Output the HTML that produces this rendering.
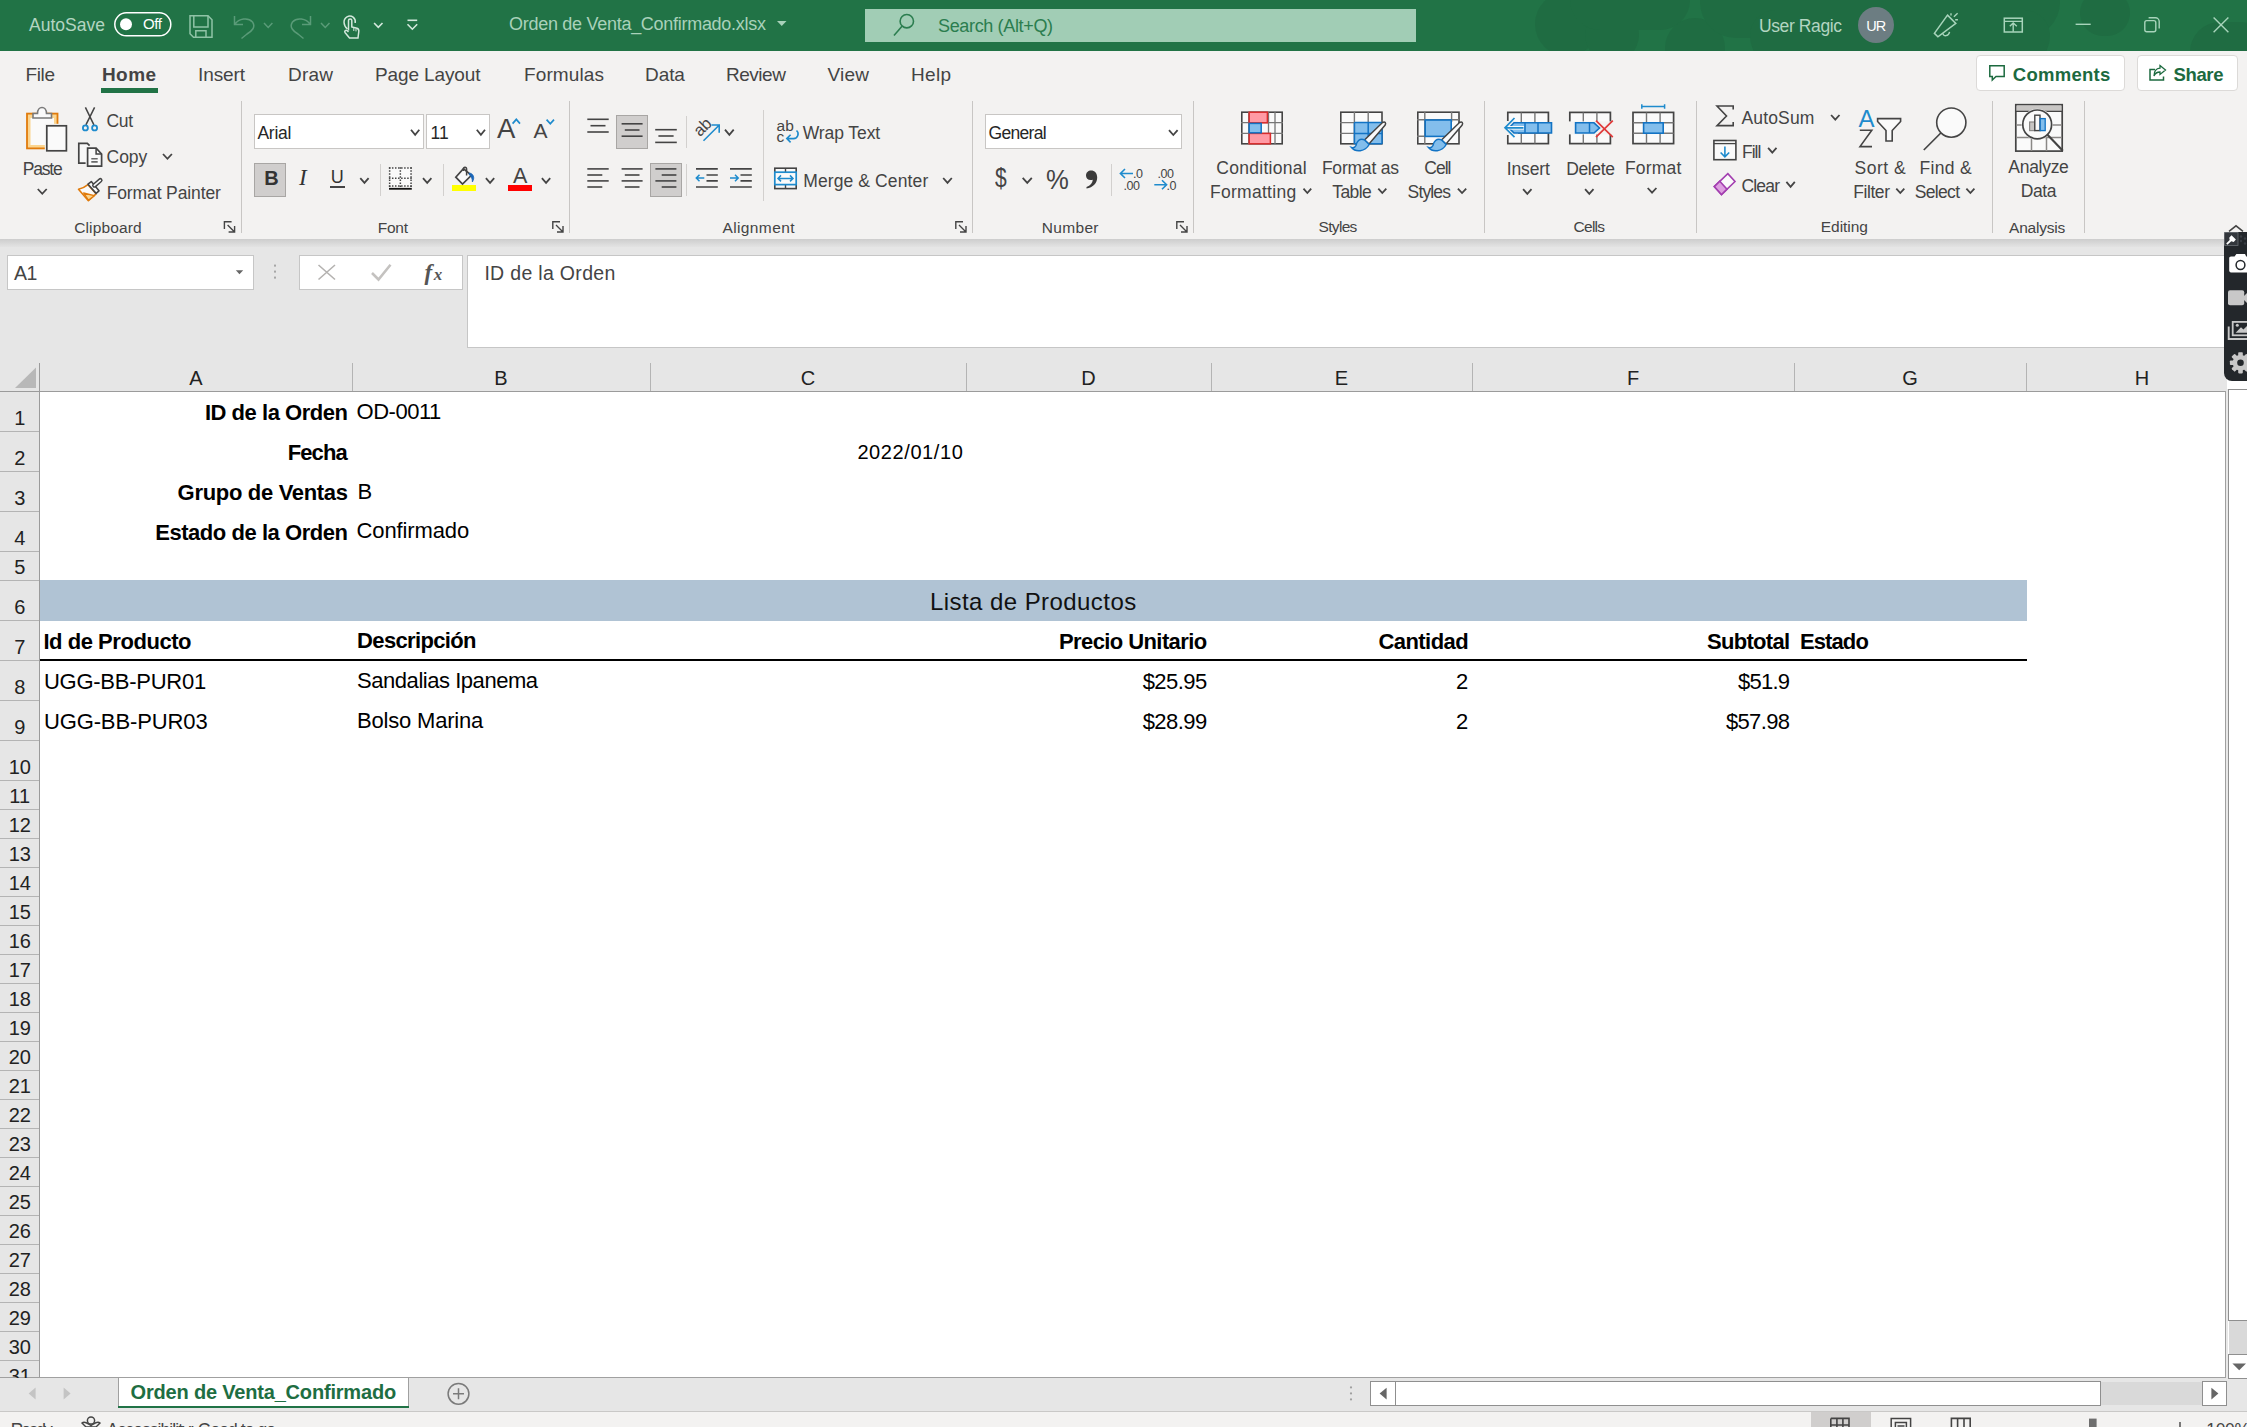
<!DOCTYPE html>
<html><head><meta charset="utf-8"><title>Orden de Venta_Confirmado.xlsx - Excel</title>
<style>
html,body{margin:0;padding:0;}
body{width:2247px;height:1427px;position:relative;overflow:hidden;background:#fff;font-family:"Liberation Sans",sans-serif;}
.t{position:absolute;white-space:pre;line-height:1;}
.b{position:absolute;box-sizing:border-box;}
svg.ov{position:absolute;left:0;top:0;}
</style></head><body>
<div class="b" style="left:0px;top:0px;width:2247px;height:51px;background:#217346;"></div>
<div class="b" style="left:1500px;top:0;width:747px;height:51px;overflow:hidden;"><div class="b" style="left:35px;top:-8px;width:64px;height:64px;border-radius:32px;background:#1f6c42;"></div><div class="b" style="left:85px;top:8px;width:54px;height:54px;border-radius:27px;background:#1f6c42;"></div><div class="b" style="left:70px;top:-30px;width:120px;height:60px;border-radius:30px;background:#1f6c42;"></div><div class="b" style="left:165px;top:18px;width:60px;height:60px;border-radius:30px;background:#1f6c42;"></div><div class="b" style="left:200px;top:-40px;width:360px;height:78px;border-radius:36px;background:#1f6c42;"></div><div class="b" style="left:250px;top:10px;width:300px;height:60px;border-radius:30px 30px 40px 40px;background:#1f6c42;"></div><div class="b" style="left:580px;top:-10px;width:50px;height:46px;border-radius:23px;background:#1f6c42;"></div><div class="b" style="left:690px;top:22px;width:80px;height:60px;border-radius:30px;background:#1f6c42;"></div></div>
<div class="b" style="left:0px;top:51px;width:2247px;height:188px;background:#f3f2f1;"></div>
<div class="b" style="left:0px;top:239px;width:2247px;height:9px;background:linear-gradient(#cdcdcd,#e6e6e6);"></div>
<div class="b" style="left:0px;top:247px;width:2247px;height:116px;background:#e6e6e6;"></div>
<div class="b" style="left:0px;top:363px;width:2247px;height:29px;background:#e6e6e6;"></div>
<div class="b" style="left:0px;top:392px;width:2247px;height:985px;background:#fff;"></div>
<div class="b" style="left:0px;top:1377px;width:2247px;height:34px;background:#e6e6e6;"></div>
<div class="b" style="left:0px;top:1411px;width:2247px;height:16px;background:#f3f2f1;"></div>
<div class="b" style="left:0px;top:1411px;width:2247px;height:1px;background:#c9c8c7;"></div>
<div class="b" style="left:865px;top:9px;width:551px;height:33px;background:#a1cdb5;"></div>
<div class="b" style="left:1976px;top:55px;width:149px;height:36px;background:#fff;border:1px solid #dcdad8;border-radius:4px;"></div>
<div class="b" style="left:2137px;top:55px;width:101px;height:36px;background:#fff;border:1px solid #dcdad8;border-radius:4px;"></div>
<div class="b" style="left:101px;top:88px;width:57px;height:5px;background:#217346;"></div>
<div class="b" style="left:241px;top:101px;width:1px;height:132px;background:#c8c6c4;"></div>
<div class="b" style="left:569px;top:101px;width:1px;height:132px;background:#c8c6c4;"></div>
<div class="b" style="left:972px;top:101px;width:1px;height:132px;background:#c8c6c4;"></div>
<div class="b" style="left:1193px;top:101px;width:1px;height:132px;background:#c8c6c4;"></div>
<div class="b" style="left:1484px;top:101px;width:1px;height:132px;background:#c8c6c4;"></div>
<div class="b" style="left:1696px;top:101px;width:1px;height:132px;background:#c8c6c4;"></div>
<div class="b" style="left:1992px;top:101px;width:1px;height:132px;background:#c8c6c4;"></div>
<div class="b" style="left:2084px;top:101px;width:1px;height:132px;background:#c8c6c4;"></div>
<div class="b" style="left:380px;top:164px;width:1px;height:32px;background:#d2d0ce;"></div>
<div class="b" style="left:443px;top:164px;width:1px;height:32px;background:#d2d0ce;"></div>
<div class="b" style="left:686px;top:116px;width:1px;height:32px;background:#d2d0ce;"></div>
<div class="b" style="left:686px;top:164px;width:1px;height:32px;background:#d2d0ce;"></div>
<div class="b" style="left:763px;top:110px;width:1px;height:91px;background:#d2d0ce;"></div>
<div class="b" style="left:1111px;top:164px;width:1px;height:32px;background:#d2d0ce;"></div>
<div class="b" style="left:254px;top:114px;width:170px;height:35px;background:#fff;border:1px solid #c8c6c4;"></div>
<div class="b" style="left:426px;top:114px;width:64px;height:35px;background:#fff;border:1px solid #c8c6c4;"></div>
<div class="b" style="left:985px;top:114px;width:197px;height:35px;background:#fff;border:1px solid #c8c6c4;"></div>
<div class="b" style="left:254px;top:163px;width:32px;height:34px;background:#d0cecd;border:1px solid #a8a6a4;"></div>
<div class="b" style="left:616px;top:115px;width:32px;height:34px;background:#d0cecd;border:1px solid #a8a6a4;"></div>
<div class="b" style="left:650px;top:163px;width:32px;height:34px;background:#d0cecd;border:1px solid #a8a6a4;"></div>
<div class="b" style="left:7px;top:255px;width:247px;height:35px;background:#fff;border:1px solid #c6c6c6;"></div>
<div class="b" style="left:299px;top:255px;width:164px;height:35px;background:#fff;border:1px solid #c6c6c6;"></div>
<div class="b" style="left:467px;top:255px;width:1790px;height:93px;background:#fff;border:1px solid #c6c6c6;"></div>
<div class="b" style="left:352px;top:363px;width:1px;height:28px;background:#b4b4b4;"></div>
<div class="b" style="left:650px;top:363px;width:1px;height:28px;background:#b4b4b4;"></div>
<div class="b" style="left:966px;top:363px;width:1px;height:28px;background:#b4b4b4;"></div>
<div class="b" style="left:1211px;top:363px;width:1px;height:28px;background:#b4b4b4;"></div>
<div class="b" style="left:1472px;top:363px;width:1px;height:28px;background:#b4b4b4;"></div>
<div class="b" style="left:1794px;top:363px;width:1px;height:28px;background:#b4b4b4;"></div>
<div class="b" style="left:2026px;top:363px;width:1px;height:28px;background:#b4b4b4;"></div>
<div class="b" style="left:0px;top:391px;width:2227px;height:1px;background:#9b9b9b;"></div>
<div class="b" style="left:0px;top:392px;width:39px;height:985px;background:#e6e6e6;"></div>
<div class="b" style="left:39px;top:363px;width:1px;height:1014px;background:#9b9b9b;"></div>
<div class="b" style="left:0px;top:431px;width:39px;height:1px;background:#b4b4b4;"></div>
<div class="b" style="left:0px;top:471px;width:39px;height:1px;background:#b4b4b4;"></div>
<div class="b" style="left:0px;top:511px;width:39px;height:1px;background:#b4b4b4;"></div>
<div class="b" style="left:0px;top:551px;width:39px;height:1px;background:#b4b4b4;"></div>
<div class="b" style="left:0px;top:580px;width:39px;height:1px;background:#b4b4b4;"></div>
<div class="b" style="left:0px;top:620px;width:39px;height:1px;background:#b4b4b4;"></div>
<div class="b" style="left:0px;top:660px;width:39px;height:1px;background:#b4b4b4;"></div>
<div class="b" style="left:0px;top:700px;width:39px;height:1px;background:#b4b4b4;"></div>
<div class="b" style="left:0px;top:740px;width:39px;height:1px;background:#b4b4b4;"></div>
<div class="b" style="left:0px;top:780px;width:39px;height:1px;background:#b4b4b4;"></div>
<div class="b" style="left:0px;top:809px;width:39px;height:1px;background:#b4b4b4;"></div>
<div class="b" style="left:0px;top:838px;width:39px;height:1px;background:#b4b4b4;"></div>
<div class="b" style="left:0px;top:867px;width:39px;height:1px;background:#b4b4b4;"></div>
<div class="b" style="left:0px;top:896px;width:39px;height:1px;background:#b4b4b4;"></div>
<div class="b" style="left:0px;top:925px;width:39px;height:1px;background:#b4b4b4;"></div>
<div class="b" style="left:0px;top:954px;width:39px;height:1px;background:#b4b4b4;"></div>
<div class="b" style="left:0px;top:983px;width:39px;height:1px;background:#b4b4b4;"></div>
<div class="b" style="left:0px;top:1012px;width:39px;height:1px;background:#b4b4b4;"></div>
<div class="b" style="left:0px;top:1041px;width:39px;height:1px;background:#b4b4b4;"></div>
<div class="b" style="left:0px;top:1070px;width:39px;height:1px;background:#b4b4b4;"></div>
<div class="b" style="left:0px;top:1099px;width:39px;height:1px;background:#b4b4b4;"></div>
<div class="b" style="left:0px;top:1128px;width:39px;height:1px;background:#b4b4b4;"></div>
<div class="b" style="left:0px;top:1157px;width:39px;height:1px;background:#b4b4b4;"></div>
<div class="b" style="left:0px;top:1186px;width:39px;height:1px;background:#b4b4b4;"></div>
<div class="b" style="left:0px;top:1215px;width:39px;height:1px;background:#b4b4b4;"></div>
<div class="b" style="left:0px;top:1244px;width:39px;height:1px;background:#b4b4b4;"></div>
<div class="b" style="left:0px;top:1273px;width:39px;height:1px;background:#b4b4b4;"></div>
<div class="b" style="left:0px;top:1302px;width:39px;height:1px;background:#b4b4b4;"></div>
<div class="b" style="left:0px;top:1331px;width:39px;height:1px;background:#b4b4b4;"></div>
<div class="b" style="left:0px;top:1360px;width:39px;height:1px;background:#b4b4b4;"></div>
<div class="b" style="left:2225px;top:391px;width:1px;height:987px;background:#a0a0a0;"></div>
<div class="b" style="left:0px;top:1377px;width:2226px;height:1px;background:#a0a0a0;"></div>
<div class="b" style="left:40px;top:580px;width:1987px;height:40.5px;background:#b0c3d4;"></div>
<div class="b" style="left:40px;top:659px;width:1987px;height:2px;background:#000;"></div>
<div class="b" style="left:2227px;top:363px;width:20px;height:1015px;background:#fff;"></div>
<div class="b" style="left:2226px;top:389px;width:2px;height:990px;background:#e8e8e8;"></div>
<div class="b" style="left:2228px;top:389px;width:20px;height:932px;background:#fff;border:1px solid #8f8f8f;"></div>
<div class="b" style="left:2229px;top:1321px;width:18px;height:33px;background:#d9d9d9;"></div>
<div class="b" style="left:2228px;top:1354px;width:20px;height:25px;background:#fff;border:1px solid #8f8f8f;"></div>
<div class="b" style="left:2227px;top:391px;width:20px;height:0px;"></div>
<div class="b" style="left:1370px;top:1381px;width:26px;height:25px;background:#fff;border:1px solid #8f8f8f;"></div>
<div class="b" style="left:1395px;top:1381px;width:706px;height:25px;background:#fff;border:1px solid #8f8f8f;"></div>
<div class="b" style="left:2101px;top:1382px;width:101px;height:23px;background:#d9d9d9;"></div>
<div class="b" style="left:2202px;top:1381px;width:25px;height:25px;background:#fff;border:1px solid #8f8f8f;"></div>
<div class="b" style="left:118px;top:1378px;width:291px;height:30px;background:#fff;"></div>
<div class="b" style="left:118px;top:1377px;width:1px;height:31px;background:#a0a0a0;"></div>
<div class="b" style="left:408px;top:1377px;width:1px;height:31px;background:#a0a0a0;"></div>
<div class="b" style="left:118px;top:1406px;width:291px;height:2px;background:#217346;"></div>
<div class="b" style="left:1811px;top:1412px;width:60px;height:15px;background:#d0cecd;"></div>
<div class="b" style="left:2224px;top:232px;width:30px;height:149px;background:#23272b;border-radius:3px 0 0 8px;"></div>
<div class="b" style="left:1857.8px;top:6.8px;width:36px;height:36px;background:#6c7d82;border-radius:18px;"></div>
<span class="t" style="left:29.00px;top:17.00px;font-size:17.5px;color:#b3d5c1;letter-spacing:0.014px;">AutoSave</span>
<span class="t" style="left:143.00px;top:16.00px;font-size:15px;color:#fff;letter-spacing:-0.400px;">Off</span>
<span class="t" style="left:509.00px;top:15.00px;font-size:18px;color:#a9d1ba;letter-spacing:-0.283px;">Orden de Venta_Confirmado.xlsx</span>
<span class="t" style="left:938.00px;top:17.00px;font-size:18px;color:#2b7d4f;letter-spacing:-0.346px;">Search (Alt+Q)</span>
<span class="t" style="left:1759.00px;top:18.00px;font-size:17.5px;color:#b3d5c1;letter-spacing:-0.400px;">User Ragic</span>
<span class="t" style="left:1866.30px;top:19.00px;font-size:14.5px;color:#fff;letter-spacing:-1.000px;">UR</span>
<span class="t" style="left:25.60px;top:65.00px;font-size:19px;color:#444;letter-spacing:-0.400px;">File</span>
<span class="t" style="left:102.00px;top:65.00px;font-size:19px;color:#444;font-weight:bold;letter-spacing:0.400px;">Home</span>
<span class="t" style="left:198.00px;top:65.00px;font-size:19px;color:#444;letter-spacing:-0.100px;">Insert</span>
<span class="t" style="left:288.00px;top:65.00px;font-size:19px;color:#444;letter-spacing:0.200px;">Draw</span>
<span class="t" style="left:375.00px;top:65.00px;font-size:19px;color:#444;letter-spacing:-0.120px;">Page Layout</span>
<span class="t" style="left:524.00px;top:65.00px;font-size:19px;color:#444;letter-spacing:0.114px;">Formulas</span>
<span class="t" style="left:645.00px;top:65.00px;font-size:19px;color:#444;letter-spacing:-0.067px;">Data</span>
<span class="t" style="left:726.00px;top:65.00px;font-size:19px;color:#444;letter-spacing:-0.480px;">Review</span>
<span class="t" style="left:827.50px;top:65.00px;font-size:19px;color:#444;letter-spacing:0.200px;">View</span>
<span class="t" style="left:911.00px;top:65.00px;font-size:19px;color:#444;letter-spacing:0.300px;">Help</span>
<span class="t" style="left:2012.80px;top:66.00px;font-size:18.5px;color:#1c6a3f;font-weight:bold;letter-spacing:0.257px;">Comments</span>
<span class="t" style="left:2173.50px;top:66.00px;font-size:18.5px;color:#1c6a3f;font-weight:bold;letter-spacing:-0.375px;">Share</span>
<span class="t" style="left:22.80px;top:161.00px;font-size:17.5px;color:#444;letter-spacing:-1.200px;">Paste</span>
<span class="t" style="left:106.50px;top:113.00px;font-size:17.5px;color:#444;letter-spacing:-0.350px;">Cut</span>
<span class="t" style="left:106.50px;top:149.00px;font-size:17.5px;color:#444;">Copy</span>
<span class="t" style="left:106.70px;top:185.00px;font-size:17.5px;color:#444;letter-spacing:-0.123px;">Format Painter</span>
<span class="t" style="left:802.70px;top:125.00px;font-size:17.5px;color:#444;letter-spacing:-0.075px;">Wrap Text</span>
<span class="t" style="left:803.20px;top:173.00px;font-size:17.5px;color:#444;letter-spacing:0.115px;">Merge &amp; Center</span>
<span class="t" style="left:1216.30px;top:160.00px;font-size:17.5px;color:#444;letter-spacing:0.290px;">Conditional</span>
<span class="t" style="left:1210.00px;top:184.00px;font-size:17.5px;color:#444;letter-spacing:0.278px;">Formatting</span>
<span class="t" style="left:1321.90px;top:160.00px;font-size:17.5px;color:#444;letter-spacing:-0.213px;">Format as</span>
<span class="t" style="left:1332.20px;top:184.00px;font-size:17.5px;color:#444;letter-spacing:-0.550px;">Table</span>
<span class="t" style="left:1424.30px;top:160.00px;font-size:17.5px;color:#444;letter-spacing:-1.000px;">Cell</span>
<span class="t" style="left:1407.60px;top:184.00px;font-size:17.5px;color:#444;letter-spacing:-0.860px;">Styles</span>
<span class="t" style="left:1506.80px;top:161.00px;font-size:17.5px;color:#444;letter-spacing:-0.140px;">Insert</span>
<span class="t" style="left:1566.20px;top:161.00px;font-size:17.5px;color:#444;letter-spacing:-0.380px;">Delete</span>
<span class="t" style="left:1624.90px;top:160.00px;font-size:17.5px;color:#444;letter-spacing:0.200px;">Format</span>
<span class="t" style="left:1741.40px;top:110.00px;font-size:17.5px;color:#444;letter-spacing:0.167px;">AutoSum</span>
<span class="t" style="left:1742.00px;top:144.00px;font-size:17.5px;color:#444;letter-spacing:-1.000px;">Fill</span>
<span class="t" style="left:1741.40px;top:178.00px;font-size:17.5px;color:#444;letter-spacing:-0.775px;">Clear</span>
<span class="t" style="left:1854.50px;top:160.00px;font-size:17.5px;color:#444;letter-spacing:0.500px;">Sort &amp;</span>
<span class="t" style="left:1853.20px;top:184.00px;font-size:17.5px;color:#444;letter-spacing:-0.420px;">Filter</span>
<span class="t" style="left:1919.60px;top:160.00px;font-size:17.5px;color:#444;letter-spacing:0.300px;">Find &amp;</span>
<span class="t" style="left:1914.70px;top:184.00px;font-size:17.5px;color:#444;letter-spacing:-0.660px;">Select</span>
<span class="t" style="left:2008.30px;top:159.00px;font-size:17.5px;color:#444;letter-spacing:-0.283px;">Analyze</span>
<span class="t" style="left:2020.80px;top:183.00px;font-size:17.5px;color:#444;letter-spacing:-0.400px;">Data</span>
<span class="t" style="left:74.20px;top:220.00px;font-size:15.5px;color:#444;letter-spacing:0.150px;">Clipboard</span>
<span class="t" style="left:377.70px;top:220.00px;font-size:15.5px;color:#444;letter-spacing:-0.233px;">Font</span>
<span class="t" style="left:722.40px;top:220.00px;font-size:15.5px;color:#444;letter-spacing:0.400px;">Alignment</span>
<span class="t" style="left:1041.70px;top:220.00px;font-size:15.5px;color:#444;letter-spacing:0.340px;">Number</span>
<span class="t" style="left:1318.60px;top:219.00px;font-size:15.5px;color:#444;letter-spacing:-0.700px;">Styles</span>
<span class="t" style="left:1573.60px;top:219.00px;font-size:15.5px;color:#444;letter-spacing:-0.750px;">Cells</span>
<span class="t" style="left:1820.80px;top:219.00px;font-size:15.5px;color:#444;letter-spacing:-0.033px;">Editing</span>
<span class="t" style="left:2009.10px;top:220.00px;font-size:15.5px;color:#444;letter-spacing:-0.214px;">Analysis</span>
<span class="t" style="left:257.40px;top:125.00px;font-size:17.5px;color:#262626;letter-spacing:-0.225px;">Arial</span>
<span class="t" style="left:430.60px;top:125.00px;font-size:17.5px;color:#262626;">11</span>
<span class="t" style="left:988.50px;top:125.00px;font-size:17.5px;color:#262626;letter-spacing:-0.683px;">General</span>
<span class="t" style="left:264.20px;top:168.00px;font-size:20px;color:#333;font-weight:bold;">B</span>
<span class="t" style="left:299.10px;top:166.00px;font-size:23px;color:#333;font-style:italic;font-family:'Liberation Serif',serif;">I</span>
<span class="t" style="left:330.80px;top:168.00px;font-size:18px;color:#333;">U</span>
<div class="b" style="left:330px;top:186px;width:15px;height:2px;background:#444;"></div>
<span class="t" style="left:497.00px;top:115.00px;font-size:27.5px;color:#444;">A</span>
<span class="t" style="left:533.50px;top:120.00px;font-size:21px;color:#444;">A</span>
<span class="t" style="left:513.10px;top:166.00px;font-size:21.5px;color:#444;">A</span>
<div class="b" style="left:452px;top:185px;width:24px;height:6px;background:#ffff00;"></div>
<div class="b" style="left:508px;top:185px;width:24px;height:6px;background:#ff0000;"></div>
<span class="t" style="left:994.70px;top:165.00px;font-size:27px;color:#444;transform:scaleX(.78);transform-origin:0 0;">$</span>
<span class="t" style="left:1045.60px;top:165.00px;font-size:28.5px;color:#444;transform:scaleX(.9);transform-origin:0 0;">%</span>
<span class="t" style="left:14.00px;top:264.00px;font-size:19.5px;color:#444;letter-spacing:-0.500px;">A1</span>
<span class="t" style="left:484.40px;top:264.00px;font-size:19.5px;color:#444;letter-spacing:0.315px;">ID de la Orden</span>
<span class="t" style="left:189.30px;top:368.00px;font-size:20px;color:#222;">A</span>
<span class="t" style="left:494.35px;top:368.00px;font-size:20px;color:#222;">B</span>
<span class="t" style="left:800.80px;top:368.00px;font-size:20px;color:#222;">C</span>
<span class="t" style="left:1081.30px;top:368.00px;font-size:20px;color:#222;">D</span>
<span class="t" style="left:1334.85px;top:368.00px;font-size:20px;color:#222;">E</span>
<span class="t" style="left:1626.90px;top:368.00px;font-size:20px;color:#222;">F</span>
<span class="t" style="left:1902.20px;top:368.00px;font-size:20px;color:#222;">G</span>
<span class="t" style="left:2134.80px;top:368.00px;font-size:20px;color:#222;">H</span>
<span class="t" style="left:14.20px;top:408.00px;font-size:20px;color:#222;">1</span>
<span class="t" style="left:14.20px;top:448.00px;font-size:20px;color:#222;">2</span>
<span class="t" style="left:14.20px;top:488.00px;font-size:20px;color:#222;">3</span>
<span class="t" style="left:14.20px;top:528.00px;font-size:20px;color:#222;">4</span>
<span class="t" style="left:14.20px;top:557.00px;font-size:20px;color:#222;">5</span>
<span class="t" style="left:14.20px;top:597.00px;font-size:20px;color:#222;">6</span>
<span class="t" style="left:14.20px;top:637.00px;font-size:20px;color:#222;">7</span>
<span class="t" style="left:14.20px;top:677.00px;font-size:20px;color:#222;">8</span>
<span class="t" style="left:14.20px;top:717.00px;font-size:20px;color:#222;">9</span>
<span class="t" style="left:8.65px;top:757.00px;font-size:20px;color:#222;">10</span>
<span class="t" style="left:9.35px;top:786.00px;font-size:20px;color:#222;">11</span>
<span class="t" style="left:8.65px;top:815.00px;font-size:20px;color:#222;">12</span>
<span class="t" style="left:8.65px;top:844.00px;font-size:20px;color:#222;">13</span>
<span class="t" style="left:8.65px;top:873.00px;font-size:20px;color:#222;">14</span>
<span class="t" style="left:8.65px;top:902.00px;font-size:20px;color:#222;">15</span>
<span class="t" style="left:8.65px;top:931.00px;font-size:20px;color:#222;">16</span>
<span class="t" style="left:8.65px;top:960.00px;font-size:20px;color:#222;">17</span>
<span class="t" style="left:8.65px;top:989.00px;font-size:20px;color:#222;">18</span>
<span class="t" style="left:8.65px;top:1018.00px;font-size:20px;color:#222;">19</span>
<span class="t" style="left:8.65px;top:1047.00px;font-size:20px;color:#222;">20</span>
<span class="t" style="left:8.65px;top:1076.00px;font-size:20px;color:#222;">21</span>
<span class="t" style="left:8.65px;top:1105.00px;font-size:20px;color:#222;">22</span>
<span class="t" style="left:8.65px;top:1134.00px;font-size:20px;color:#222;">23</span>
<span class="t" style="left:8.65px;top:1163.00px;font-size:20px;color:#222;">24</span>
<span class="t" style="left:8.65px;top:1192.00px;font-size:20px;color:#222;">25</span>
<span class="t" style="left:8.65px;top:1221.00px;font-size:20px;color:#222;">26</span>
<span class="t" style="left:8.65px;top:1250.00px;font-size:20px;color:#222;">27</span>
<span class="t" style="left:8.65px;top:1279.00px;font-size:20px;color:#222;">28</span>
<span class="t" style="left:8.65px;top:1308.00px;font-size:20px;color:#222;">29</span>
<span class="t" style="left:8.65px;top:1337.00px;font-size:20px;color:#222;">30</span>
<span class="t" style="left:8.65px;top:1366.00px;font-size:20px;color:#222;">31</span>
<div class="b" style="left:0px;top:1378px;width:118px;height:33px;background:#e6e6e6;"></div>
<span class="t" style="left:204.90px;top:402.00px;font-size:22px;color:#000;font-weight:bold;letter-spacing:-0.462px;">ID de la Orden</span>
<span class="t" style="left:356.60px;top:401.00px;font-size:22px;color:#000;letter-spacing:-0.500px;">OD-0011</span>
<span class="t" style="left:287.70px;top:442.00px;font-size:22px;color:#000;font-weight:bold;letter-spacing:-0.875px;">Fecha</span>
<span class="t" style="left:857.40px;top:442.00px;font-size:20px;color:#000;letter-spacing:0.589px;">2022/01/10</span>
<span class="t" style="left:177.60px;top:482.00px;font-size:22px;color:#000;font-weight:bold;letter-spacing:-0.314px;">Grupo de Ventas</span>
<span class="t" style="left:357.60px;top:481.00px;font-size:22px;color:#000;">B</span>
<span class="t" style="left:155.20px;top:522.00px;font-size:22px;color:#000;font-weight:bold;letter-spacing:-0.453px;">Estado de la Orden</span>
<span class="t" style="left:356.60px;top:520.00px;font-size:22px;color:#000;letter-spacing:-0.122px;">Confirmado</span>
<span class="t" style="left:930.00px;top:590.00px;font-size:24px;color:#111;letter-spacing:0.435px;">Lista de Productos</span>
<span class="t" style="left:43.40px;top:631.00px;font-size:22px;color:#000;font-weight:bold;letter-spacing:-0.454px;">Id de Producto</span>
<span class="t" style="left:357.10px;top:630.00px;font-size:22px;color:#000;font-weight:bold;letter-spacing:-0.650px;">Descripción</span>
<span class="t" style="left:1059.00px;top:631.00px;font-size:22px;color:#000;font-weight:bold;letter-spacing:-0.593px;">Precio Unitario</span>
<span class="t" style="left:1378.50px;top:631.00px;font-size:22px;color:#000;font-weight:bold;letter-spacing:-0.571px;">Cantidad</span>
<span class="t" style="left:1706.90px;top:631.00px;font-size:22px;color:#000;font-weight:bold;letter-spacing:-0.686px;">Subtotal</span>
<span class="t" style="left:1799.90px;top:631.00px;font-size:22px;color:#000;font-weight:bold;letter-spacing:-0.880px;">Estado</span>
<span class="t" style="left:43.90px;top:671.00px;font-size:22px;color:#000;letter-spacing:-0.245px;">UGG-BB-PUR01</span>
<span class="t" style="left:43.90px;top:711.00px;font-size:22px;color:#000;letter-spacing:-0.118px;">UGG-BB-PUR03</span>
<span class="t" style="left:357.10px;top:670.00px;font-size:22px;color:#000;letter-spacing:-0.463px;">Sandalias Ipanema</span>
<span class="t" style="left:357.10px;top:710.00px;font-size:22px;color:#000;letter-spacing:-0.200px;">Bolso Marina</span>
<span class="t" style="left:1142.70px;top:671.00px;font-size:22px;color:#000;letter-spacing:-0.560px;">$25.95</span>
<span class="t" style="left:1142.70px;top:711.00px;font-size:22px;color:#000;letter-spacing:-0.560px;">$28.99</span>
<span class="t" style="left:1456.00px;top:671.00px;font-size:22px;color:#000;">2</span>
<span class="t" style="left:1456.00px;top:711.00px;font-size:22px;color:#000;">2</span>
<span class="t" style="left:1738.10px;top:671.00px;font-size:22px;color:#000;letter-spacing:-0.775px;">$51.9</span>
<span class="t" style="left:1725.90px;top:711.00px;font-size:22px;color:#000;letter-spacing:-0.620px;">$57.98</span>
<span class="t" style="left:130.60px;top:1382.00px;font-size:20px;color:#1e6e42;font-weight:bold;letter-spacing:-0.188px;">Orden de Venta_Confirmado</span>
<span class="t" style="left:10.70px;top:1422.00px;font-size:17.5px;color:#444;letter-spacing:-2.150px;">Ready</span>
<span class="t" style="left:106.80px;top:1422.00px;font-size:17.5px;color:#444;letter-spacing:-0.933px;">Accessibility: Good to go</span>
<span class="t" style="left:2206.30px;top:1422.00px;font-size:17.5px;color:#444;letter-spacing:-0.367px;">100%</span>
<svg class="ov" width="2247" height="1427" viewBox="0 0 2247 1427" fill="none">
<rect x="114.8" y="12.8" width="56" height="23" rx="11.5" stroke="#fff" stroke-width="1.5"/>
<circle cx="126" cy="24.3" r="6" fill="#fff"/>
<path d="M190 15.8 H208 L212 19.8 V37.2 H193.5 L190 33.7 Z" stroke="#8fc3a6" stroke-width="1.5"/><path d="M193.8 15.8 V27 H208 V15.8 M195.8 37.2 V30.8 H206 V37.2" stroke="#8fc3a6" stroke-width="1.5"/>
<path d="M234.5 16 V24.5 H243 M234.8 24.3 C239 18.5 248 17 252.5 22 C256 27 252 31 247 34 L241.5 38.5" stroke="#5a9b78" stroke-width="1.5"/>
<path d="M264 23 L268.2 27.4 L272.4 23" stroke="#5a9b78" stroke-width="1.5" fill="none"/>
<path d="M310.5 16 V24.5 H302 M310.2 24.3 C306 18.5 297 17 292.5 22 C289 27 293 31 298 34 L303.5 38.5" stroke="#5a9b78" stroke-width="1.5"/>
<path d="M321 23 L325.25 27.4 L329.5 23" stroke="#5a9b78" stroke-width="1.5" fill="none"/>
<path d="M347.5 29 C343.5 26 342.5 19.5 347 16.8 C351.5 14.5 356 18 355.2 23" stroke="#d3e8dc" stroke-width="1.5"/><path d="M348.5 30.5 V20.5 C348.5 18.5 351.8 18.5 351.8 20.5 V27 L357 28.2 C358.8 28.8 359 30 358.8 31.5 L358 38 H349.5 L345 32.5 C344 31 346 29.5 347.2 30.8 L348.5 32" stroke="#d3e8dc" stroke-width="1.5"/><path d="M353.8 28 V31 M356 28.6 V31.4" stroke="#d3e8dc" stroke-width="1"/>
<path d="M374.1 23 L378.3 27.4 L382.5 23" stroke="#d3e8dc" stroke-width="1.6" fill="none"/>
<path d="M407.5 20.3 H417.2" stroke="#d3e8dc" stroke-width="1.6"/>
<path d="M407.5 24.2 L412.35 29.2 L417.2 24.2" stroke="#d3e8dc" stroke-width="1.6" fill="none"/>
<path d="M777 21 H786.5 L781.75 26 Z" fill="#a9d1ba"/>
<circle cx="906.8" cy="21.2" r="6.7" stroke="#2b7d4f" stroke-width="1.6"/><path d="M902 26.2 L894 35.4" stroke="#2b7d4f" stroke-width="1.6"/>
<path d="M1947.5 15.1 L1955.8 23.4 L1937.9 36.8 L1934.4 33.3 Z" stroke="#a8d4bb" stroke-width="1.5" stroke-linejoin="miter"/><path d="M1942.8 33.4 C1943.2 36.8 1948.6 36.6 1949.6 31.8" stroke="#a8d4bb" stroke-width="1.4"/><path d="M1951 13.2 V15.4 M1953.9 16.7 L1957.6 13.3 M1955.2 19.7 H1957.9" stroke="#a8d4bb" stroke-width="1.4"/>
<rect x="2004.3" y="18.2" width="18" height="13.8" stroke="#a8d4bb" stroke-width="1.5"/><path d="M2004.3 21.4 H2022.3 M2013.2 31.8 V23.4 M2009.8 26.2 L2013.2 23 L2016.8 26.2" stroke="#a8d4bb" stroke-width="1.4"/>
<path d="M2075.6 24.3 H2090.7" stroke="#a8d4bb" stroke-width="1.4"/>
<rect x="2144.8" y="20.6" width="11" height="11.2" rx="2" stroke="#a8d4bb" stroke-width="1.4"/><path d="M2148.6 17.8 H2155.5 C2157.5 17.8 2159.2 19.5 2159.2 21.5 V28.6" stroke="#a8d4bb" stroke-width="1.4"/>
<path d="M2213.6 17.4 L2228.4 32.2 M2228.4 17.4 L2213.6 32.2" stroke="#a8d4bb" stroke-width="1.4"/>
<path d="M1989.8 65.8 H2004.2 V76.5 H1996 L1992.3 80 V76.5 H1989.8 Z" stroke="#1c6a3f" stroke-width="1.5"/>
<path d="M2155 69.5 H2150 V80 H2163.5 V76.5" stroke="#1c6a3f" stroke-width="1.5"/><path d="M2160 65.5 L2165.5 70 L2160 74.5 V72 C2157 72 2155 73.5 2154 76 C2154 71.5 2156.5 68.5 2160 68.2 Z" stroke="#1c6a3f" stroke-width="1.3"/>
<rect x="27" y="113.6" width="30.5" height="34.8" fill="#fbd58f" stroke="#e07b0c" stroke-width="1.8"/><rect x="30.5" y="118" width="23.5" height="27" fill="#fafafa"/><path d="M33 118 V113.5 H37.5 C37.5 105.5 46.5 105.5 46.5 113.5 H51.5 V118 Z" fill="#fafafa" stroke="#7a7a7a" stroke-width="1.6"/><rect x="44.8" y="123.8" width="23.6" height="29" fill="#f3f2f1"/><rect x="46.8" y="125.8" width="19.6" height="25" fill="#fafafa" stroke="#444" stroke-width="1.7"/>
<path d="M37.8 189 L42.25 193.8 L46.7 189" stroke="#444" stroke-width="1.8" fill="none"/>
<path d="M85.4 107.4 L93.9 124.8 M94.6 107.4 L85.9 124.8" stroke="#444" stroke-width="1.5"/><circle cx="85.4" cy="127.9" r="2.5" stroke="#1e8bcd" stroke-width="1.8"/><circle cx="94.6" cy="127.9" r="2.5" stroke="#1e8bcd" stroke-width="1.8"/>
<path d="M85.6 163.2 H78.8 V143.4 H87.3 L89.6 145.7" stroke="#444" stroke-width="1.7" fill="#f8f8f8"/><path d="M87.6 148.2 H96.1 L101.6 154 V166.2 H87.6 Z" fill="#fafafa" stroke="#444" stroke-width="1.7"/><path d="M96.1 148.2 V154 H101.6" stroke="#444" stroke-width="1.5"/><path d="M91.3 158.8 H97.7 M91.3 161.9 H97.7" stroke="#6a6a6a" stroke-width="1.6"/>
<path d="M163 154 L167.45 158.8 L171.9 154" stroke="#444" stroke-width="1.8" fill="none"/>
<path d="M78.5 189.3 C82 188.5 85 187 88 184.6 L96.1 193.8 L88.4 200.7 Z" fill="#fafafa" stroke="#e07b0c" stroke-width="1.6" stroke-linejoin="round"/><path d="M83.6 193 L94.3 195.7 L88.4 200.2 Z" fill="#fbd58f" stroke="#e07b0c" stroke-width="1.3" stroke-linejoin="round"/><path d="M88 184.2 L91.3 181.6 L99 190.8 L96.1 193.4 Z" fill="#fafafa" stroke="#444" stroke-width="1.6" stroke-linejoin="round"/><path d="M94.4 185.4 L100.3 180.3" stroke="#444" stroke-width="4.6" stroke-linecap="round"/><path d="M94.4 185.4 L100.3 180.3" stroke="#fafafa" stroke-width="1.7" stroke-linecap="round"/>
<path d="M231.6 221.8 H224.4 V229.0" stroke="#444" stroke-width="1.4"/><path d="M227.6 225 L234.6 232 M234.6 226 V232 H228.6" stroke="#444" stroke-width="1.4"/>
<path d="M411 129.8 L415.15 134.8 L419.3 129.8" stroke="#444" stroke-width="1.8" fill="none"/>
<path d="M476.8 129.8 L480.9 134.8 L485 129.8" stroke="#444" stroke-width="1.8" fill="none"/>
<path d="M512.6 123.6 L516.3 119.4 L520 123.6" stroke="#1e8bcd" stroke-width="1.7" fill="none"/>
<path d="M546.6 119.6 L550.3 123.8 L554 119.6" stroke="#1e8bcd" stroke-width="1.7" fill="none"/>
<path d="M360.3 178.2 L364.45000000000005 182.8 L368.6 178.2" stroke="#444" stroke-width="1.8" fill="none"/>
<path d="M423 178.2 L427.2 182.8 L431.4 178.2" stroke="#444" stroke-width="1.8" fill="none"/>
<path d="M485.9 178.2 L490.04999999999995 182.8 L494.2 178.2" stroke="#444" stroke-width="1.8" fill="none"/>
<path d="M541.9 178.2 L546.05 182.8 L550.2 178.2" stroke="#444" stroke-width="1.8" fill="none"/>
<rect x="389.6" y="167.8" width="21.5" height="18.4" fill="#fafafa"/><path d="M388.9 167.9 H412 M388.9 186.1 H412 M388.9 178.3 H412" stroke="#444" stroke-width="1.5" stroke-dasharray="1.5 1.55"/><path d="M389.65 167.2 V187 M411.05 167.2 V187 M400.35 167.2 V187" stroke="#444" stroke-width="1.5" stroke-dasharray="1.5 1.55"/><path d="M389 188.8 H411.8" stroke="#111" stroke-width="1.8"/>
<path d="M463.4 168.6 L471.4 175.4 L462.5 184 L455.8 177.2 Z" fill="#fafafa" stroke="#444" stroke-width="1.7" stroke-linejoin="miter"/><path d="M463.4 171 V169.2 C463.4 166.6 466.6 166.6 466.6 169.2 V175.4" stroke="#444" stroke-width="1.5"/><path d="M469 173.2 C472.5 172.8 474.2 176.5 473.6 179 C473.2 180.5 472.8 181.2 472.4 182 C472.4 179 471.5 176.6 469.4 174.8 Z" fill="#1a66b8" stroke="#1a66b8" stroke-width="0.8"/>
<path d="M560 221.8 H552.8 V229" stroke="#444" stroke-width="1.4"/><path d="M556 225 L563 232 M563 226 V232 H557" stroke="#444" stroke-width="1.4"/>
<path d="M587.3 119.3 H608.7" stroke="#444" stroke-width="1.6"/>
<path d="M590.5 125.7 H605.5" stroke="#444" stroke-width="1.6"/>
<path d="M587.3 132 H608.7" stroke="#444" stroke-width="1.6"/>
<path d="M621.6 123.8 H642.6" stroke="#444" stroke-width="1.6"/>
<path d="M624.8 130 H639.5" stroke="#444" stroke-width="1.6"/>
<path d="M621.6 136.2 H642.6" stroke="#444" stroke-width="1.6"/>
<path d="M655.2 129.7 H676.8" stroke="#444" stroke-width="1.6"/>
<path d="M658.4 136 H673.6" stroke="#444" stroke-width="1.6"/>
<path d="M655.2 142.4 H676.8" stroke="#444" stroke-width="1.6"/>
<path d="M587.3 168.9 H608.7" stroke="#444" stroke-width="1.6"/>
<path d="M587.3 175 H602.3" stroke="#444" stroke-width="1.6"/>
<path d="M587.3 180.9 H608.7" stroke="#444" stroke-width="1.6"/>
<path d="M587.3 187 H602.3" stroke="#444" stroke-width="1.6"/>
<path d="M621.6 168.9 H642.6" stroke="#444" stroke-width="1.6"/>
<path d="M624.8 175 H639.5" stroke="#444" stroke-width="1.6"/>
<path d="M621.6 180.9 H642.6" stroke="#444" stroke-width="1.6"/>
<path d="M624.8 187 H639.5" stroke="#444" stroke-width="1.6"/>
<path d="M655.4 168.9 H676.4" stroke="#444" stroke-width="1.6"/>
<path d="M661.7 175 H676.4" stroke="#444" stroke-width="1.6"/>
<path d="M655.4 180.9 H676.4" stroke="#444" stroke-width="1.6"/>
<path d="M661.7 187 H676.4" stroke="#444" stroke-width="1.6"/>
<g transform="rotate(-45 704 127)"><text x="694" y="131.5" font-family="Liberation Sans, sans-serif" font-size="16.5" fill="#444" letter-spacing="-0.5">ab</text></g>
<path d="M703.5 140.8 L718.8 125.5 M711.5 125 H719.2 V132.8" stroke="#1e8bcd" stroke-width="1.6"/>
<path d="M725 129.7 L729.35 134.8 L733.7 129.7" stroke="#444" stroke-width="1.8" fill="none"/>
<path d="M696 168.9 H717.8 M706.5 175 H717.8 M706.5 180.9 H717.8 M696 187 H717.8" stroke="#444" stroke-width="1.6"/>
<path d="M696.3 178 H704.3 M699.5 174.8 L696.3 178 L699.5 181.2" stroke="#1e8bcd" stroke-width="1.5"/>
<path d="M730 168.9 H751.8 M740.5 175 H751.8 M740.5 180.9 H751.8 M730 187 H751.8" stroke="#444" stroke-width="1.6"/>
<path d="M730 178 H738 M735 174.8 L738.2 178 L735 181.2" stroke="#1e8bcd" stroke-width="1.5"/>
<text x="776.6" y="130.8" font-family="Liberation Sans, sans-serif" font-size="15.5" fill="#444">ab</text><text x="776.6" y="142.2" font-family="Liberation Sans, sans-serif" font-size="15.5" fill="#444">c</text><path d="M796.5 130.5 C799.5 133 798 138.6 793.5 138.6 H787 M790.6 134.8 L786.8 138.6 L790.6 142.4" stroke="#1e8bcd" stroke-width="1.6"/>
<rect x="774.8" y="168.2" width="21.4" height="20.4" fill="#fafafa" stroke="#444" stroke-width="1.6"/><path d="M785.5 168.2 V172 M785.5 184.8 V188.6" stroke="#444" stroke-width="1.4"/><rect x="774.8" y="172.2" width="21.4" height="12.4" fill="#fafafa" stroke="#1e8bcd" stroke-width="1.7"/><path d="M778 178.4 H793 M781 175.4 L778 178.4 L781 181.4 M790 175.4 L793 178.4 L790 181.4" stroke="#1e8bcd" stroke-width="1.5"/>
<path d="M943.2 178 L947.5 182.8 L951.8 178" stroke="#444" stroke-width="1.8" fill="none"/>
<path d="M963 221.8 H955.8 V229" stroke="#444" stroke-width="1.4"/><path d="M959 225 L966 232 M966 226 V232 H960" stroke="#444" stroke-width="1.4"/>
<path d="M1169 130.2 L1173.3 135 L1177.6 130.2" stroke="#444" stroke-width="1.8" fill="none"/>
<path d="M1022.7 177.8 L1027.25 182.8 L1031.8 177.8" stroke="#444" stroke-width="1.8" fill="none"/>
<path d="M1091.2 170.5 C1094.5 170.5 1097.2 173 1097.2 177.5 C1097.2 183 1093 187.5 1086.5 188.5 V187 C1090.5 185.5 1092.5 183 1092.8 179.8 C1088.5 181 1086 178.5 1086 175.5 C1086 172.5 1088.2 170.5 1091.2 170.5 Z" fill="#3b3b3b"/>
<path d="M1120.5 173.5 H1133 M1125 169 L1120.4 173.5 L1125 178" stroke="#1e8bcd" stroke-width="1.6"/><text x="1133" y="177.5" font-family="Liberation Sans, sans-serif" font-size="12.5" fill="#444" letter-spacing="-0.4">.0</text><text x="1123.5" y="189.5" font-family="Liberation Sans, sans-serif" font-size="12.5" fill="#444" letter-spacing="-0.4">.00</text>
<text x="1157.5" y="177.5" font-family="Liberation Sans, sans-serif" font-size="12.5" fill="#444" letter-spacing="-0.4">.00</text><text x="1166.5" y="189.5" font-family="Liberation Sans, sans-serif" font-size="12.5" fill="#444" letter-spacing="-0.4">.0</text><path d="M1154.3 184.8 H1166.5 M1162 180.3 L1166.6 184.8 L1162 189.3" stroke="#1e8bcd" stroke-width="1.6"/>
<path d="M1184 221.8 H1176.8 V229" stroke="#444" stroke-width="1.4"/><path d="M1180 225 L1187 232 M1187 226 V232 H1181" stroke="#444" stroke-width="1.4"/>
<rect x="1241.8" y="112.2" width="40.4" height="31.6" fill="#fafafa" stroke="#444" stroke-width="1.6"/><path d="M1248.7 112 V144 M1268.5 112 V144 M1275 112 V144 M1241 122.6 H1283 M1241 133.4 H1283" stroke="#777" stroke-width="1.3"/><rect x="1249.2" y="112.2" width="18.2" height="10.6" fill="#ff9aa4" stroke="#d92c2c" stroke-width="1.5"/><rect x="1249.2" y="133.4" width="21.2" height="10.4" fill="#ff9aa4" stroke="#d92c2c" stroke-width="1.5"/><rect x="1249.2" y="123.4" width="12" height="9.4" fill="#83beec" stroke="#1273c4" stroke-width="1.5"/>
<path d="M1303.5 188.6 L1307.35 193 L1311.2 188.6" stroke="#444" stroke-width="1.8" fill="none"/>
<rect x="1340.8" y="112.2" width="41.2" height="31.6" fill="#fafafa" stroke="#444" stroke-width="1.6"/><rect x="1354.4" y="122.6" width="27.6" height="21.2" fill="#83beec"/><path d="M1354.4 112 V144 M1368.2 112 V122.6 M1340 122.6 H1354.4 M1340 133.4 H1354.4" stroke="#777" stroke-width="1.4"/><path d="M1354.4 122.6 H1382 M1354.4 133.4 H1382 M1354.4 122.6 V144 M1368.2 122.6 V144 M1354.4 143.8 H1382 M1382 122.6 V144" stroke="#1273c4" stroke-width="1.5"/>
<path d="M1382.5 122.5 C1385.0 121.0 1386.5 123.0 1385.0 125.3 L1369.0 144.0 L1364.5 140.0 Z" fill="#fafafa" stroke="#444" stroke-width="1.5"/><path d="M1364.3 139.7 C1359.5 138.0 1356.5 141.5 1356.0 145.5 C1355.0 147.5 1353.0 148.0 1351.5 147.5 C1355.5 152.5 1365.0 152.0 1369.2 144.5 Z" fill="#83beec" stroke="#1273c4" stroke-width="1.5"/>
<rect x="1417.8" y="112.2" width="41.2" height="31.6" fill="#fafafa" stroke="#444" stroke-width="1.6"/><path d="M1424.8 112 V144 M1451.6 112 V122 M1417 119.8 H1459 M1417 136.2 H1425" stroke="#777" stroke-width="1.4"/><rect x="1425.2" y="120" width="26" height="16.4" fill="#83beec" stroke="#1273c4" stroke-width="1.6"/>
<path d="M1459.5 122.5 C1462.0 121.0 1463.5 123.0 1462.0 125.3 L1446.0 144.0 L1441.5 140.0 Z" fill="#fafafa" stroke="#444" stroke-width="1.5"/><path d="M1441.3 139.7 C1436.5 138.0 1433.5 141.5 1433.0 145.5 C1432.0 147.5 1430.0 148.0 1428.5 147.5 C1432.5 152.5 1442.0 152.0 1446.2 144.5 Z" fill="#83beec" stroke="#1273c4" stroke-width="1.5"/>
<path d="M1378.3 188.6 L1382.3 193 L1386.3 188.6" stroke="#444" stroke-width="1.8" fill="none"/>
<path d="M1457.9 188.6 L1462.0500000000002 193 L1466.2 188.6" stroke="#444" stroke-width="1.8" fill="none"/>
<rect x="1507.8" y="112.4" width="40.6" height="31.2" fill="#fafafa" stroke="#444" stroke-width="1.7"/><path d="M1521.3 112.4 V143.6 M1534.9 112.4 V143.6 M1507.8 122.8 H1548.3999999999999 M1507.8 133.2 H1548.3999999999999" stroke="#777" stroke-width="1.4"/>
<rect x="1500" y="121" width="18" height="14" fill="#f3f2f1"/>
<path d="M1514 122.8 H1551.5 V133 H1514 L1509 128 Z" fill="#83beec" stroke="#1273c4" stroke-width="1.6"/><path d="M1525 122.8 V133 M1538 122.8 V133" stroke="#1273c4" stroke-width="1.5"/><path d="M1506 127.8 H1524 " stroke="#fafafa" stroke-width="3.6"/><path d="M1505.2 127.8 H1523.5 M1514.5 118 L1505 127.8 L1514.5 137.2" stroke="#1e8bcd" stroke-width="1.7"/>
<path d="M1523.1 189.2 L1527.3 193.8 L1531.5 189.2" stroke="#444" stroke-width="1.8" fill="none"/>
<rect x="1569.8" y="112.4" width="40.6" height="31.2" fill="#fafafa" stroke="#444" stroke-width="1.7"/><path d="M1583.3 112.4 V143.6 M1596.9 112.4 V143.6 M1569.8 122.8 H1610.3999999999999 M1569.8 133.2 H1610.3999999999999" stroke="#777" stroke-width="1.4"/>
<rect x="1565" y="121.4" width="50" height="13" fill="#f3f2f1"/>
<path d="M1575.6 122.8 H1594 L1599.5 128 L1594 133 H1575.6 Z" fill="#83beec" stroke="#1273c4" stroke-width="1.6"/><path d="M1589.5 122.8 V133" stroke="#1273c4" stroke-width="1.5"/><path d="M1596 120.6 L1612.8 137.2 M1612.8 120.6 L1596 137.2" stroke="#e03a3a" stroke-width="1.7"/>
<path d="M1585.1 189.2 L1589.3 193.8 L1593.5 189.2" stroke="#444" stroke-width="1.8" fill="none"/>
<rect x="1633" y="112.4" width="40.6" height="31.2" fill="#fafafa" stroke="#444" stroke-width="1.7"/><path d="M1646.5 112.4 V143.6 M1660.1 112.4 V143.6 M1633 122.8 H1673.6 M1633 133.2 H1673.6" stroke="#777" stroke-width="1.4"/>
<rect x="1643.6" y="122.8" width="19.6" height="10.4" fill="#83beec" stroke="#1273c4" stroke-width="1.6"/><path d="M1641.8 106.5 H1664.6 M1641.8 104.2 V108.8 M1664.6 104.2 V108.8" stroke="#1e8bcd" stroke-width="1.5"/>
<path d="M1647.7 188 L1652.0500000000002 192.6 L1656.4 188" stroke="#444" stroke-width="1.8" fill="none"/>
<path d="M1733.2 109.5 V106 H1717 L1726.5 116 L1717 125.6 H1733.2 V122" stroke="#444" stroke-width="1.6" stroke-linejoin="miter"/>
<path d="M1831.1 115 L1835.3 119.6 L1839.5 115" stroke="#444" stroke-width="1.8" fill="none"/>
<rect x="1713.9" y="140.5" width="22" height="19.2" fill="#fafafa" stroke="#444" stroke-width="1.6"/><path d="M1713.9 143.6 H1736" stroke="#444" stroke-width="1.3"/><path d="M1724.9 146.5 V156.5 M1720.6 152.5 L1724.9 156.8 L1729.2 152.5" stroke="#1e8bcd" stroke-width="1.6"/>
<path d="M1768.1 147.8 L1772.3 152.6 L1776.5 147.8" stroke="#444" stroke-width="1.8" fill="none"/>
<path d="M1727.8 173.6 L1735 181.5 L1721.5 194.5 L1714.3 186.6 Z" fill="#fafafa" stroke="#a33fb0" stroke-width="1.6"/><path d="M1719.8 181.2 L1727 189.2 L1721.5 194.5 L1714.3 186.6 Z" fill="#dd9fe0" stroke="#a33fb0" stroke-width="1.6"/>
<path d="M1786.4 181.9 L1790.6 186.9 L1794.8 181.9" stroke="#444" stroke-width="1.8" fill="none"/>
<text x="1858.6" y="126.8" font-family="Liberation Sans, sans-serif" font-size="24" fill="#1e8bcd">A</text>
<path d="M1859.8 130.2 H1871.8 L1860 146.6 H1872" stroke="#444" stroke-width="1.6"/>
<path d="M1877.6 118.6 H1900.6 V121.5 L1892.2 130.5 V141 H1886 V130.5 L1877.6 121.5 Z" fill="#fafafa" stroke="#444" stroke-width="1.6"/>
<path d="M1896.3 188.6 L1900.3 193 L1904.3 188.6" stroke="#444" stroke-width="1.8" fill="none"/>
<circle cx="1951.3" cy="122.6" r="14.6" fill="#fafafa" stroke="#444" stroke-width="1.6"/><path d="M1940.8 133 L1923.8 150" stroke="#444" stroke-width="1.7"/>
<path d="M1966.4 188.6 L1970.4 193 L1974.4 188.6" stroke="#444" stroke-width="1.8" fill="none"/>
<rect x="2015.8" y="104.7" width="46.4" height="46.4" fill="#fafafa" stroke="#444" stroke-width="1.7"/><rect x="2016.6" y="105.5" width="44.8" height="5.5" fill="#c8c6c4"/><path d="M2016 111.4 H2062" stroke="#444" stroke-width="1.4"/><path d="M2016 125 H2062 M2016 137.5 H2062 M2031.5 137.5 V151 M2046.5 137.5 V151" stroke="#8a8886" stroke-width="1.5"/><circle cx="2037.2" cy="124.4" r="15.6" fill="#fafafa"/><circle cx="2037.2" cy="124.4" r="14.4" fill="#fafafa" stroke="#444" stroke-width="1.7"/><rect x="2029.6" y="122" width="5" height="8.6" fill="#c8c6c4" stroke="#8a8886" stroke-width="1.2"/><rect x="2034.8" y="115.2" width="5.2" height="15.4" fill="#fafafa" stroke="#444" stroke-width="1.4"/><rect x="2040.2" y="118.6" width="5" height="12" fill="#83beec" stroke="#1273c4" stroke-width="1.3"/><path d="M2047.5 134.8 L2062.8 150.8" stroke="#444" stroke-width="2.1"/>
<path d="M2229 231.4 L2236 225.8 L2243 231.4" stroke="#444" stroke-width="1.5"/>
<path d="M235.8 270.3 H243.2 L239.5 274.2 Z" fill="#666"/>
<rect x="274" y="264.6" width="2" height="2" fill="#a6a6a6"/><rect x="274" y="270.6" width="2" height="2" fill="#a6a6a6"/><rect x="274" y="276.6" width="2" height="2" fill="#a6a6a6"/>
<path d="M318.5 265 L335 279.5 M335 265 L318.5 279.5" stroke="#b4b2b0" stroke-width="1.6"/>
<path d="M372 273 L378.5 279.5 L390.5 264.8" stroke="#c4c2c0" stroke-width="2.6"/>
<text x="424.5" y="279.6" font-family="Liberation Serif, serif" font-style="italic" font-weight="bold" font-size="23" fill="#555">f</text><text x="433.8" y="279.6" font-family="Liberation Serif, serif" font-style="italic" font-weight="bold" font-size="17" fill="#555">x</text>
<path d="M36 367.5 V388 H15 Z" fill="#b8b8b8"/>
<rect x="2224.6" y="232.4" width="13.4" height="13.2" fill="#33373c" stroke="#6a6e73" stroke-width="0.8"/><path d="M2229.2 237.8 L2231.5 235.3 L2235.9 239.6 L2233.7 241.9 L2231.3 241.3 L2227.4 244.8 L2226.2 243.6 L2229.7 240 Z" fill="#fff"/>
<circle cx="2241" cy="236.5" r="1.2" fill="#3a3e44"/><circle cx="2245" cy="238.5" r="1.2" fill="#3a3e44"/><circle cx="2241" cy="241" r="1.2" fill="#3a3e44"/><circle cx="2245" cy="243.5" r="1.2" fill="#3a3e44"/>
<path d="M2231 256.4 H2234.6 L2236.4 253.9 H2245 L2246.2 256.4 H2248 V272.4 H2231 C2229.9 272.4 2229.2 271.6 2229.2 270.6 V258.2 C2229.2 257.2 2229.9 256.4 2231 256.4 Z" fill="#fff"/><circle cx="2240.5" cy="265" r="4.4" fill="none" stroke="#23272b" stroke-width="1.5"/>
<rect x="2228" y="290.2" width="16.2" height="15" rx="2" fill="#c8c8c8"/><path d="M2244 296 L2248 292 V304 L2244 300 Z" fill="#c8c8c8"/>
<path d="M2228.7 326.4 V339 H2248" stroke="#c8c8c8" stroke-width="1.9"/><rect x="2232.7" y="321.9" width="16" height="13.4" fill="#23272b" stroke="#c8c8c8" stroke-width="1.8"/><circle cx="2237.3" cy="325.2" r="1.5" fill="#c8c8c8"/><path d="M2235.6 332.8 L2241 327.2 L2243.4 329.6 L2247 326 V332.8 Z" fill="#c8c8c8"/>
<rect x="2238.2" y="352.2" width="4.6" height="6" rx="0.8" fill="#c8c8c8" transform="rotate(0 2240.5 362.8)"/><rect x="2238.2" y="352.2" width="4.6" height="6" rx="0.8" fill="#c8c8c8" transform="rotate(45 2240.5 362.8)"/><rect x="2238.2" y="352.2" width="4.6" height="6" rx="0.8" fill="#c8c8c8" transform="rotate(90 2240.5 362.8)"/><rect x="2238.2" y="352.2" width="4.6" height="6" rx="0.8" fill="#c8c8c8" transform="rotate(135 2240.5 362.8)"/><rect x="2238.2" y="352.2" width="4.6" height="6" rx="0.8" fill="#c8c8c8" transform="rotate(180 2240.5 362.8)"/><rect x="2238.2" y="352.2" width="4.6" height="6" rx="0.8" fill="#c8c8c8" transform="rotate(225 2240.5 362.8)"/><rect x="2238.2" y="352.2" width="4.6" height="6" rx="0.8" fill="#c8c8c8" transform="rotate(270 2240.5 362.8)"/><rect x="2238.2" y="352.2" width="4.6" height="6" rx="0.8" fill="#c8c8c8" transform="rotate(315 2240.5 362.8)"/><circle cx="2240.5" cy="362.8" r="7.8" fill="#c8c8c8"/><circle cx="2240.5" cy="362.8" r="3.3" fill="#23272b"/>
<path d="M35.6 1387.4 V1399.4 L28.6 1393.4 Z" fill="#c4c4c4"/><path d="M63.6 1387.4 V1399.4 L70.6 1393.4 Z" fill="#c4c4c4"/>
<circle cx="458.5" cy="1393.8" r="10.4" stroke="#7a7a7a" stroke-width="1.5"/><path d="M453 1393.8 H464 M458.5 1388.3 V1399.3" stroke="#7a7a7a" stroke-width="1.5"/>
<circle cx="1351" cy="1387.4" r="1.1" fill="#a0a0a0"/><circle cx="1351" cy="1393.4" r="1.1" fill="#a0a0a0"/><circle cx="1351" cy="1399.4" r="1.1" fill="#a0a0a0"/>
<path d="M1386.6 1387.8 V1399.4 L1379.6 1393.6 Z" fill="#666"/><path d="M2211.4 1387.8 V1399.4 L2218.4 1393.6 Z" fill="#666"/>
<path d="M2232.4 1363.6 H2246 L2239.2 1370.2 Z" fill="#666"/>
<circle cx="91" cy="1420.5" r="3.6" stroke="#444" stroke-width="1.5"/><path d="M82 1423 C85 1420.5 88 1424 91 1425.5 C94 1424 97 1420.5 100 1423 L96 1427 H86 Z" stroke="#444" stroke-width="1.4"/>
<path d="M1830.8 1418.4 H1849 V1428 M1830.8 1418.4 V1428 M1836.9 1418.4 V1428 M1842.9 1418.4 V1428 M1830.8 1425 H1849" stroke="#444" stroke-width="1.6"/>
<path d="M1891.2 1428 V1418.4 H1910.6 V1428 M1895.4 1428 V1422.4 H1906.4 V1428 M1897.5 1426 H1904.5" stroke="#444" stroke-width="1.5"/>
<path d="M1951.4 1428 V1418.4 H1970.2 V1428 M1957.6 1418.4 V1428 M1964 1418.4 V1428" stroke="#444" stroke-width="1.6"/>
<rect x="2089" y="1418.6" width="7.6" height="10" fill="#6e6e6e"/><path d="M2180 1422 V1428" stroke="#444" stroke-width="1.4"/>
</svg>
</body></html>
